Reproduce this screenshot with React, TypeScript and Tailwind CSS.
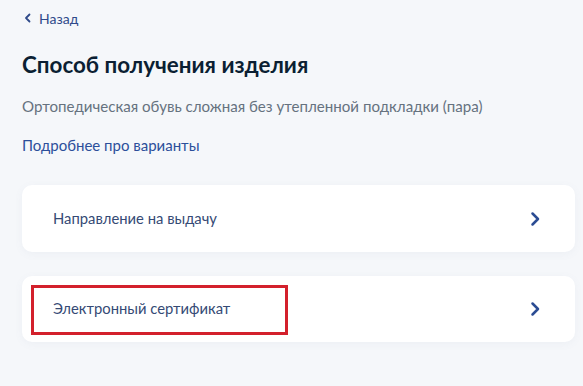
export default function App() {
  const Chevron = () => (
    <svg width="12" height="16" viewBox="0 0 12 16" fill="none" className="ml-auto">
      <path d="M3.5 2.5 L9 8 L3.5 13.5" stroke="#2b4c93" strokeWidth="2.5" strokeLinecap="round" strokeLinejoin="round" />
    </svg>
  );
  return (
    <div className="w-[583px] h-[386px] bg-[#f5f7fa] overflow-hidden pl-[22px] pr-[8px]" style={{ fontFamily: 'Lato, "Noto Sans", sans-serif' }}>
      <div className="flex items-center gap-[7px] pt-[8px] h-[28px] text-[14px] text-[#2f4a8a]">
        <svg width="8" height="10" viewBox="0 0 8 10" fill="none" className="ml-[2px]">
          <path d="M5.5 1.5 L2 5 L5.5 8.5" stroke="#2f4a8a" strokeWidth="1.8" strokeLinecap="round" strokeLinejoin="round" />
        </svg>
        <span>Назад</span>
      </div>
      <h1 className="mt-[22px] text-[22.4px] leading-[30px] font-bold text-[#0b1f33]">Способ получения изделия</h1>
      <p className="mt-[15px] text-[15.1px] leading-[22px] text-[#66727f]">Ортопедическая обувь сложная без утепленной подкладки (пара)</p>
      <p className="mt-[17px] text-[15px] leading-[22px] text-[#2c4f9a]">Подробнее про варианты</p>
      <div className="mt-[29px] flex flex-col gap-[24px]">
        <div className="h-[67px] bg-white rounded-[10px] flex items-center pl-[31px] pr-[34px] shadow-[0_2px_8px_rgba(100,120,160,0.06)]">
          <span className="text-[14.8px] text-[#354a75]">Направление на выдачу</span>
          <Chevron />
        </div>
        <div className="h-[66px] bg-white rounded-[10px] flex items-center pl-[9px] pr-[34px] shadow-[0_2px_8px_rgba(100,120,160,0.06)]">
          <div className="w-[257px] h-[50px] border-[3px] border-[#d3202c] flex items-center pl-[19px] mt-[2px]">
            <span className="text-[14.8px] text-[#354a75] mt-[-3px]">Электронный сертификат</span>
          </div>
          <Chevron />
        </div>
      </div>
    </div>
  );
}
